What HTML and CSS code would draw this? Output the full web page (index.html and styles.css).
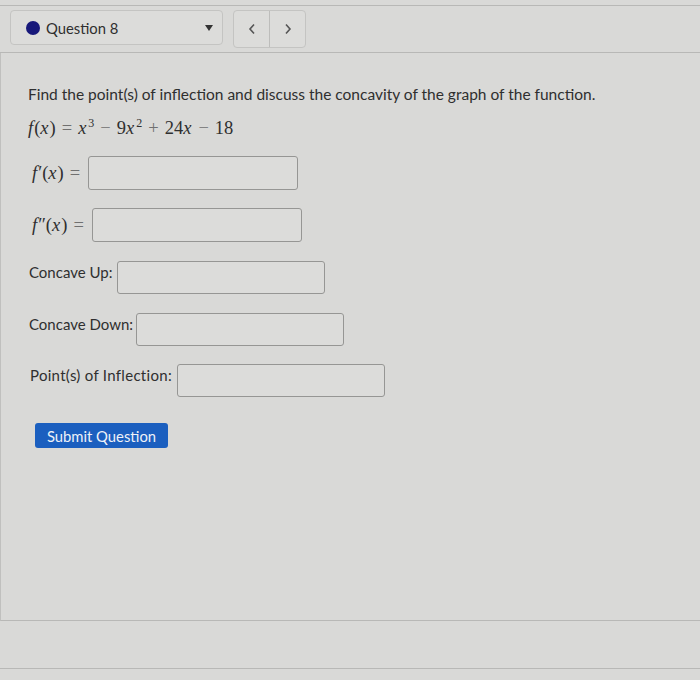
FILE: index.html
```html
<!DOCTYPE html>
<html>
<head>
<meta charset="utf-8">
<link rel="stylesheet" href="styles.css">
</head>
<body>
<div class="page">
  <div class="header">
    <div class="qselect">
      <span class="dot"></span>
      <span class="qname">Question 8</span>
      <svg class="caret" width="8" height="6" viewBox="0 0 8 6"><path d="M0 0 L8 0 L4 6 Z" fill="#333"/></svg>
    </div>
    <div class="nav">
      <div class="navbtn">
        <svg width="8" height="12" viewBox="0 0 8 12"><path d="M6 1.5 L2 6 L6 10.5" fill="none" stroke="#555" stroke-width="1.6"/></svg>
      </div>
      <div class="navbtn">
        <svg width="8" height="12" viewBox="0 0 8 12"><path d="M2 1.5 L6 6 L2 10.5" fill="none" stroke="#555" stroke-width="1.6"/></svg>
      </div>
    </div>
  </div>
  <div class="content">
    <p class="prompt">Find the point(s) of inflection and discuss the concavity of the graph of the function.</p>
    <p class="math"><i>f</i>(<i>x</i>)<span class="op">=</span><i>x</i><sup>3</sup><span class="op">−</span>9<i>x</i><sup>2</sup><span class="op">+</span>24<i>x</i><span class="op">−</span>18</p>
    <div class="row r1"><span class="mlabel"><i>f</i>′(<i>x</i>)<span class="op">=</span></span><span class="box"></span></div>
    <div class="row r2"><span class="mlabel"><i>f</i>″(<i>x</i>)<span class="op">=</span></span><span class="box"></span></div>
    <div class="row trow r3"><span class="label">Concave Up:</span><span class="box"></span></div>
    <div class="row trow r4"><span class="label">Concave Down:</span><span class="box"></span></div>
    <div class="row trow r5"><span class="label">Point(s) of Inflection:</span><span class="box"></span></div>
    <button class="submit">Submit Question</button>
  </div>
  <div class="footer"></div>
</div>
</body>
</html>
```
FILE: styles.css
```css
html, body {
  margin: 0;
  padding: 0;
  background: #d9d9d7;
}
body {
  font-family: Lato, "Open Sans", sans-serif;
  color: #2f2f2f;
  width: 700px;
  height: 680px;
  overflow: hidden;
}
.page {
  padding-top: 5px;
}
.header {
  border-top: 1px solid #b8b8b6;
  border-bottom: 1px solid #b8b8b6;
  display: flex;
  align-items: flex-start;
  padding-left: 10px;
  padding-top: 4px;
  box-sizing: border-box;
  height: 48px;
}
.qselect {
  width: 213px;
  height: 35px;
  box-sizing: border-box;
  border: 1px solid #c4c4c2;
  border-radius: 4px;
  background: #dcdcda;
  display: flex;
  align-items: center;
  padding-left: 15px;
  padding-right: 9px;
}
.dot {
  width: 14px;
  height: 14px;
  border-radius: 50%;
  background: #17187a;
  flex: none;
}
.qname {
  margin-left: 6px;
  font-size: 14.8px;
  flex: 1;
}
.caret {
  flex: none;
}
.nav {
  margin-left: 10px;
  display: flex;
  height: 38px;
  box-sizing: border-box;
  border: 1px solid #c4c4c2;
  border-radius: 4px;
  background: #dcdcda;
}
.navbtn {
  width: 35px;
  display: flex;
  align-items: center;
  justify-content: center;
}
.navbtn + .navbtn {
  border-left: 1px solid #bdbdbb;
}
.content {
  border-left: 1px solid #c0c0be;
  border-bottom: 1px solid #b8b8b6;
  height: 568px;
  box-sizing: border-box;
  padding-left: 27px;
  padding-top: 32px;
}
.prompt {
  margin: 0;
  font-size: 15.5px;
  line-height: 18px;
}
.math {
  margin: 15px 0 0 0;
  font-family: "Liberation Serif", "DejaVu Serif", serif;
  font-size: 18.5px;
  line-height: 20px;
}
.math i, .mlabel i {
  margin-right: 1px;
}
.math sup {
  font-size: 12px;
  vertical-align: 7px;
  line-height: 0;
  margin-left: 1px;
}
.op {
  margin: 0 6px;
  color: #707070;
  font-style: normal;
}
.mlabel {
  font-family: "Liberation Serif", "DejaVu Serif", serif;
  font-size: 18.5px;
  padding-left: 2px;
}
.mlabel .op {
  margin-right: 4px;
}
.row {
  display: flex;
  align-items: center;
}
.trow {
  align-items: flex-start;
}
.r1 { margin-top: 18px; }
.r2 { margin-top: 18px; }
.r3 { margin-top: 19px; }
.r4 { margin-top: 19px; }
.r5 { margin-top: 18px; }
.r1 .mlabel { padding-left: 4px; width: 56px; }
.r2 .mlabel { padding-left: 4px; width: 60px; }
.label {
  font-size: 15px;
  line-height: 22px;
  margin-right: 5px;
  padding-left: 1px;
}
.r4 .label { margin-right: 3px; }
.r5 .label { letter-spacing: 0.3px; padding-left: 2px; }
.box {
  display: block;
  width: 208px;
  height: 33px;
  box-sizing: border-box;
  border: 1.5px solid #969694;
  border-radius: 3px;
  background: #dcdcda;
}
.r1 .box { height: 34px; width: 210px; }
.r2 .box { height: 34px; width: 210px; }
.submit {
  margin-top: 26px;
  margin-left: 7px;
  display: block;
  width: 133px;
  height: 25px;
  padding: 0;
  border: none;
  border-radius: 3px;
  background: #1b5fbf;
  color: #eef2f8;
  font-family: Lato, "Open Sans", sans-serif;
  font-size: 14.8px;
}
.footer {
  height: 47px;
  border-bottom: 1px solid #b8b8b6;
}
```
